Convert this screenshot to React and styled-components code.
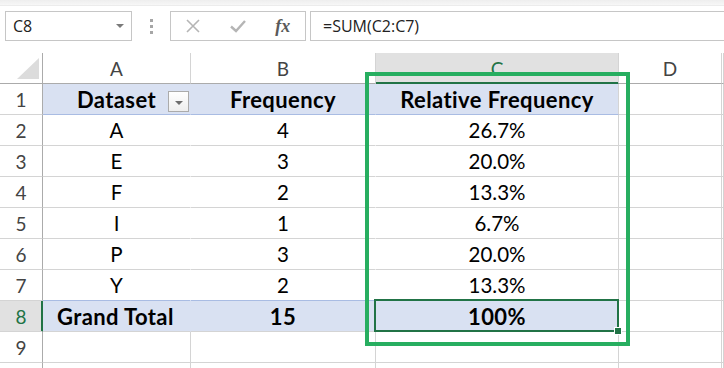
import styled, { createGlobalStyle } from "styled-components";

const GlobalStyle = createGlobalStyle`
  html, body {
    margin: 0;
    padding: 0;
    background: #ffffff;
    overflow: hidden;
  }
  * { box-sizing: border-box; }
`;

const GRID = "#d4d4d4";
const HEAD_LINE = "#ababab";
const SELECT = "#217346";
const TABLE_FILL = "#d9e1f2";
const TABLE_LINE = "#a9bce3";

const Page = styled.div`
  position: relative;
  width: 724px;
  height: 368px;
  overflow: hidden;
  background: #fff;
  font-family: Lato, "Open Sans", sans-serif;
`;

const TopBand = styled.div`
  height: 6px;
  background: linear-gradient(#eeeeee, #f7f7f7);
  border-bottom: 1px solid #ececec;
`;

const FormulaBar = styled.div`
  display: flex;
  align-items: stretch;
  height: 30px;
  margin-top: 5px;
  padding-left: 5px;
  font-family: "Open Sans", "Noto Sans", sans-serif;
  font-size: 16px;
  color: #222;
`;

const NameBox = styled.div`
  width: 127px;
  display: flex;
  align-items: center;
  justify-content: space-between;
  padding: 0 7px 0 7px;
  border: 1px solid #c6c6c6;
`;

const DropArrow = styled.span`
  width: 0;
  height: 0;
  border-left: 4px solid transparent;
  border-right: 4px solid transparent;
  border-top: 4px solid #7a7a7a;
`;

const Grip = styled.div`
  width: 38px;
  display: flex;
  flex-direction: column;
  align-items: center;
  justify-content: center;
  gap: 3px;
`;

const GripDot = styled.span`
  width: 3px;
  height: 3px;
  background: #a6a6a6;
`;

const FxBox = styled.div`
  width: 136px;
  display: grid;
  grid-template-columns: repeat(3, 1fr);
  align-items: center;
  justify-items: center;
  border: 1px solid #c6c6c6;
`;

const FxLabel = styled.span`
  font-family: "Liberation Serif", "DejaVu Serif", serif;
  font-style: italic;
  font-weight: bold;
  font-size: 18px;
  color: #5a5a5a;
`;

const FormulaInput = styled.div`
  flex: 1;
  margin-left: 4px;
  margin-right: -2px;
  display: flex;
  align-items: center;
  padding-left: 12px;
  border: 1px solid #c6c6c6;
`;

const Sheet = styled.div`
  display: grid;
  grid-template-columns: 43px 148px 185px 243px 103px 1fr;
  grid-auto-rows: 31px;
  margin-top: 12px;
`;

const Corner = styled.div`
  display: flex;
  align-items: flex-end;
  justify-content: flex-end;
  padding: 0 3px 4px 0;
  border-right: 1px solid ${HEAD_LINE};
  border-bottom: 1px solid ${HEAD_LINE};
`;

const ColHead = styled.div`
  display: flex;
  align-items: center;
  justify-content: center;
  font-size: 19px;
  color: ${(p) => (p.$active ? SELECT : "#444")};
  background: ${(p) => (p.$active ? "#e1e1e1" : "#fff")};
  border-right: 1px solid ${GRID};
  border-bottom: 1px solid ${(p) => (p.$active ? SELECT : HEAD_LINE)};
  box-shadow: ${(p) => (p.$active ? `inset 0 -1px 0 ${SELECT}` : "none")};
`;

const RowHead = styled.div`
  display: flex;
  align-items: center;
  justify-content: center;
  font-size: 19px;
  color: ${(p) => (p.$active ? SELECT : "#444")};
  background: ${(p) => (p.$active ? "#e1e1e1" : "#fff")};
  border-right: 1px solid ${(p) => (p.$active ? SELECT : HEAD_LINE)};
  border-bottom: 1px solid ${GRID};
  box-shadow: ${(p) => (p.$active ? `inset -1px 0 0 ${SELECT}` : "none")};
`;

const Cell = styled.div`
  position: relative;
  display: flex;
  align-items: center;
  justify-content: ${(p) => (p.$left ? "flex-start" : "center")};
  padding-left: ${(p) => (p.$left ? "14px" : "0")};
  font-size: ${(p) => (p.$bold ? "22px" : "20.5px")};
  font-weight: ${(p) => (p.$bold ? 700 : 400)};
  letter-spacing: ${(p) => (p.$bold ? "0.4px" : "0")};
  color: #000;
  white-space: nowrap;
  background: ${(p) => p.$fill || "#fff"};
  border-right: 1px solid ${(p) => p.$rightLine || GRID};
  border-bottom: 1px solid ${(p) => p.$bottomLine || GRID};
`;

const FilterButton = styled.span`
  position: absolute;
  right: 1px;
  top: 7px;
  width: 21px;
  height: 21px;
  display: flex;
  align-items: center;
  justify-content: center;
  border: 1px solid #ababab;
  background: linear-gradient(#ffffff, #eeeeee);
  &::after {
    content: "";
    border-left: 4px solid transparent;
    border-right: 4px solid transparent;
    border-top: 4px solid #6d6d6d;
    margin-top: 2px;
  }
`;

const Selection = styled.span`
  position: absolute;
  z-index: 2;
  left: -2px;
  top: -2px;
  right: -1px;
  bottom: -1px;
  border: 2px solid ${SELECT};
  pointer-events: none;
`;

const FillHandle = styled.span`
  position: absolute;
  right: -5px;
  bottom: -5px;
  width: 8px;
  height: 8px;
  background: ${SELECT};
  border: 1px solid #fff;
`;

const Highlight = styled.div`
  position: absolute;
  z-index: 3;
  left: 365px;
  top: 72px;
  width: 265px;
  height: 274px;
  border: 4px solid #27ae60;
  pointer-events: none;
`;

const columns = ["A", "B", "C", "D", ""];

const table = [
  ["Dataset", "Frequency", "Relative Frequency"],
  ["A", "4", "26.7%"],
  ["E", "3", "20.0%"],
  ["F", "2", "13.3%"],
  ["I", "1", "6.7%"],
  ["P", "3", "20.0%"],
  ["Y", "2", "13.3%"],
  ["Grand Total", "15", "100%"],
];

function XIcon() {
  return (
    <svg width="16" height="16" viewBox="0 0 16 16">
      <path d="M2 2 L14 14 M14 2 L2 14" stroke="#b5b5b5" strokeWidth="1.6" fill="none" />
    </svg>
  );
}

function CheckIcon() {
  return (
    <svg width="18" height="16" viewBox="0 0 18 16">
      <path d="M2 8.5 L7 13 L16 3" stroke="#b5b5b5" strokeWidth="2.4" fill="none" />
    </svg>
  );
}

function CornerTriangle() {
  return (
    <svg width="22" height="21" viewBox="0 0 22 21">
      <polygon points="22,0 22,21 0,21" fill="#dcdcdc" />
    </svg>
  );
}

function TableRow({ index, values }) {
  const isHead = index === 0;
  const isTotal = index === table.length - 1;
  const filled = isHead || isTotal;
  const fill = filled ? TABLE_FILL : "#fff";
  const bottom = isHead || index === table.length - 2 ? TABLE_LINE : GRID;

  return (
    <>
      <RowHead $active={isTotal}>{index + 1}</RowHead>
      {values.map((v, c) => (
        <Cell
          key={c}
          $fill={fill}
          $bold={filled}
          $left={isTotal && c === 0}
          $rightLine={c < 2 ? fill : GRID}
          $bottomLine={bottom}
        >
          {v}
          {isHead && c === 0 && <FilterButton />}
          {isTotal && c === 2 && (
            <Selection>
              <FillHandle />
            </Selection>
          )}
        </Cell>
      ))}
      <Cell />
      <Cell />
    </>
  );
}

function EmptyRow({ label }) {
  return (
    <>
      <RowHead>{label}</RowHead>
      {columns.map((_, c) => (
        <Cell key={c} />
      ))}
    </>
  );
}

export default function App() {
  return (
    <Page>
      <GlobalStyle />
      <TopBand />
      <FormulaBar>
        <NameBox>
          <span>C8</span>
          <DropArrow />
        </NameBox>
        <Grip>
          <GripDot />
          <GripDot />
          <GripDot />
        </Grip>
        <FxBox>
          <XIcon />
          <CheckIcon />
          <FxLabel>fx</FxLabel>
        </FxBox>
        <FormulaInput>=SUM(C2:C7)</FormulaInput>
      </FormulaBar>

      <Sheet>
        <Corner>
          <CornerTriangle />
        </Corner>
        {columns.map((c, i) => (
          <ColHead key={i} $active={c === "C"}>
            {c}
          </ColHead>
        ))}
        {table.map((values, i) => (
          <TableRow key={i} index={i} values={values} />
        ))}
        <EmptyRow label="9" />
        <EmptyRow label="" />
      </Sheet>

      <Highlight />
    </Page>
  );
}
